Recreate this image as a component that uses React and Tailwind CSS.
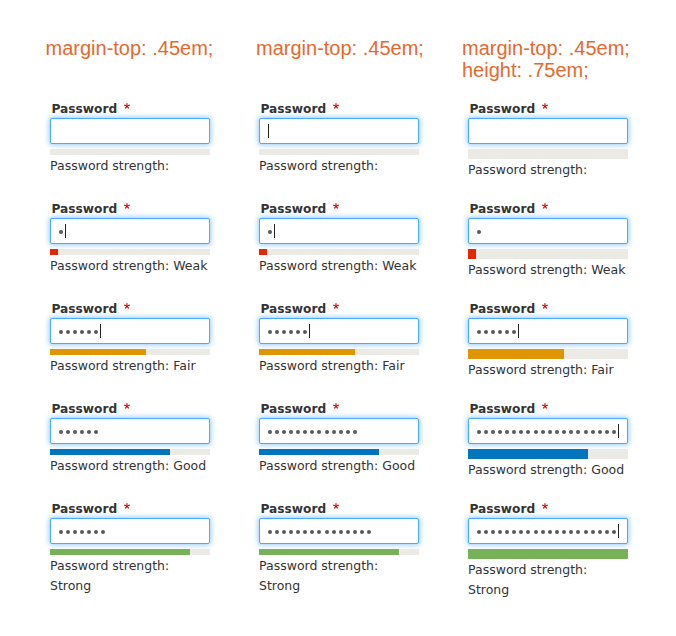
import React from "react";

const headings = [
  { lines: ["margin-top: .45em;"], cls: "-ml-[4.5px]" },
  { lines: ["margin-top: .45em;"], cls: "-ml-[3px]" },
  { lines: ["margin-top: .45em;", "height: .75em;"], cls: "-ml-[6px]" },
];

const strengths = [
  { label: "", color: "bg-[#e62600]" },
  { label: "Weak", color: "bg-[#e62600]" },
  { label: "Fair", color: "bg-[#e09600]" },
  { label: "Good", color: "bg-[#0074bd]" },
  { label: "Strong", color: "bg-[#77b259]" },
];

// per column: rows [dots, cursor, pct]
const cols = [
  {
    barH: "h-[6px]",
    rows: [
      [0, false, 0],
      [1, true, 5],
      [6, true, 60],
      [6, false, 75],
      [7, false, 87.5],
    ],
  },
  {
    barH: "h-[6px]",
    rows: [
      [0, true, 0],
      [1, true, 5],
      [6, true, 60],
      [13, false, 75],
      [15, false, 87.5],
    ],
  },
  {
    barH: "h-[10px]",
    rows: [
      [0, false, 0],
      [1, false, 5],
      [6, true, 60],
      [20, true, 75],
      [20, true, 100],
    ],
  },
];

function Star() {
  return (
    <svg
      viewBox="0 0 16 16"
      className="w-[6px] h-[6px] ml-[7px] mt-[3px] shrink-0"
      fill="#e00000"
    >
      <path d="M0,7.562l1.114-3.438c2.565,0.906,4.43,1.688,5.59,2.35C6.398,3.553,6.237,1.544,6.22,0.447h3.511c-0.05,1.597-0.234,3.6-0.558,6.003c1.664-0.838,3.566-1.613,5.714-2.325L16,7.562c-2.05,0.678-4.06,1.131-6.028,1.356c0.984,0.856,2.372,2.381,4.166,4.575l-2.906,2.059c-0.935-1.274-2.041-3.009-3.316-5.206c-1.194,2.275-2.244,4.013-3.147,5.206l-2.856-2.059c1.872-2.307,3.211-3.832,4.017-4.575C3.849,8.516,1.872,8.062,0,7.562" />
    </svg>
  );
}

function Field({ dots, cursor, pct, strength, barH }) {
  return (
    <div className="h-[100px] w-[160px] flex flex-col">
      <div className="flex items-start h-[18px] leading-[18px] text-[12.2px] font-bold text-[#333] pl-[1.5px]">
        <span>Password</span>
        <Star />
      </div>
      <div className="h-[26px] bg-white border border-[#4aaafc] rounded-[2px] shadow-[0_0_5px_1px_rgba(80,170,255,0.6)] flex items-center pl-[7.5px]">
        <div className="flex items-center gap-[3.15px] mt-[1px]">
          {Array.from({ length: dots }).map((_, i) => (
            <span key={i} className="block w-[4px] h-[4px] rounded-full bg-[#595959]" />
          ))}
        </div>
        {cursor && (
          <span className={`block w-[1px] h-[14px] bg-[#222] ${dots ? "ml-[2px]" : ""}`} />
        )}
      </div>
      <div className={`mt-[5px] bg-[#ebeae4] ${barH}`}>
        <div className={`h-full ${strength.color}`} style={{ width: `${pct}%` }} />
      </div>
      <div className="pt-[1px] text-[12.5px] leading-[20px] text-[#333]">
        Password strength:{strength.label ? " " + strength.label : ""}
      </div>
    </div>
  );
}

export default function App() {
  return (
    <div
      className="w-[676px] h-[636px] bg-white pl-[50px] pt-[37px] overflow-hidden"
      style={{ fontFamily: '"DejaVu Sans", "Lucida Grande", sans-serif' }}
    >
      <div className="grid grid-cols-[209px_209px_160px]">
        {headings.map((h, i) => (
          <div
            key={"h" + i}
            className={`h-[63px] text-[20px] leading-[22px] text-[#e5692d] whitespace-nowrap ${h.cls}`}
            style={{ fontFamily: '"Liberation Sans", Arial, sans-serif' }}
          >
            {h.lines.map((l, k) => (
              <div key={k}>{l}</div>
            ))}
          </div>
        ))}
        {strengths.map((s, r) =>
          cols.map((c, ci) => {
            const [dots, cursor, pct] = c.rows[r];
            return (
              <Field
                key={r + "-" + ci}
                dots={dots}
                cursor={cursor}
                pct={pct}
                strength={s}
                barH={c.barH}
              />
            );
          })
        )}
      </div>
    </div>
  );
}
